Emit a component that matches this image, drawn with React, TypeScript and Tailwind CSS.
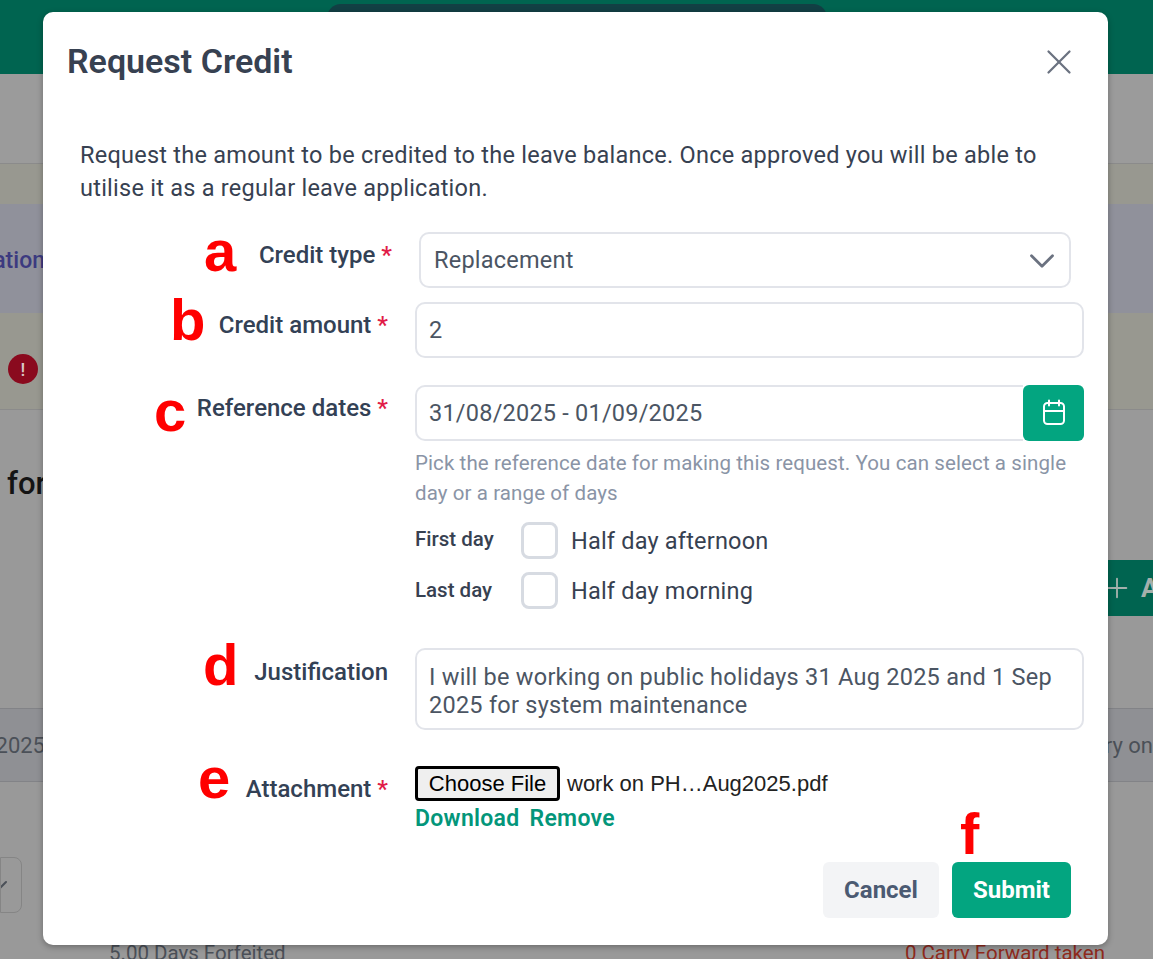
import React from 'react';
import { ChevronDown, Plus, X } from 'lucide-react';

const Marker: React.FC<{ letter: string; className: string }> = ({ letter, className }) => (
  <span className={`absolute font-['Liberation_Sans',sans-serif] font-bold text-[#ff0000] text-[58px] leading-none ${className}`}>
    {letter}
  </span>
);

const Required = () => <span className="text-[#e11d48] ml-[6px]">*</span>;

const FieldLabel: React.FC<{ text: string; required?: boolean; className?: string }> = ({ text, required, className = '' }) => (
  <label className={`w-[308px] shrink-0 text-right text-[24px] leading-[28px] font-medium text-[#334155] ${className}`}>
    {text}
    {required && <Required />}
  </label>
);

const inputCls = 'flex items-center h-[56px] bg-white border-2 border-[#e2e4ea] pt-[2px] text-[23.5px] text-[#4b5563] tracking-[0.22px]';

// calendar glyph with short ticks poking over the top edge
const CalendarGlyph = () => (
  <svg width="24" height="28" viewBox="0 0 24 28" fill="none" stroke="white" strokeWidth="2" strokeLinecap="round">
    <rect x="2" y="4" width="20" height="21" rx="3.5" />
    <path d="M2 12h20M7 1.5v5M17 1.5v5" />
  </svg>
);

const Backdrop = () => (
  <div className="h-[959px] overflow-hidden bg-[#999999] flex flex-col text-[#4b5058]">
    <div className="h-[74px] shrink-0 bg-[#006450] flex justify-center items-start pt-[4px]">
      <div className="w-[500px] h-[20px] rounded-t-[14px] bg-[#123f44]" />
    </div>
    <div className="h-[90px] shrink-0 bg-[#9b9b9b] border-b border-[#8b8b8b]" />
    <div className="h-[40px] shrink-0 bg-[#989890]" />
    <div className="h-[109px] shrink-0 bg-[#90919b] flex items-center">
      <div className="w-[45px] overflow-hidden flex justify-end whitespace-nowrap pt-[6px] text-[23px] font-medium text-[#3c3a80]">Leave application</div>
    </div>
    <div className="h-[97px] shrink-0 bg-[#989890] border-b border-[#8b8b8b] flex items-center pl-[8px] pt-[16px]">
      <div className="w-[30px] h-[30px] rounded-full bg-[#8a0a1e] text-[#d9c9c9] text-[18px] font-medium flex items-center justify-center">!</div>
    </div>
    <div className="h-[298px] shrink-0 relative">
      <div className="pl-[7px] pt-[56px] text-[31px] leading-[36px] font-medium text-[#141414]">for</div>
      <div className="absolute right-0 top-[150px] w-[45px] h-[56px] bg-[#006450] text-[#a4b0ac] text-[26px] font-bold flex items-center whitespace-nowrap overflow-hidden">
        <Plus size={32} strokeWidth={1.4} className="shrink-0 -ml-[7px]" />
        <span className="ml-[8px]">Add</span>
      </div>
    </div>
    <div className="h-[74px] shrink-0 bg-[#8f9094] border-y border-[#828387] flex items-center justify-between text-[22px]">
      <span className="w-[45px] overflow-hidden flex justify-end">2025</span>
      <span className="w-[45px] overflow-hidden flex justify-end whitespace-nowrap">ry on</span>
    </div>
    <div className="h-[75px] shrink-0" />
    <div className="h-[56px] w-[22px] shrink-0 border border-[#858585] rounded-r-[8px] flex items-center overflow-hidden">
      <ChevronDown size={24} className="-ml-[13px] shrink-0" />
    </div>
    <div className="flex justify-between pl-[109px] pr-[48px] pt-[27px] text-[20.5px] leading-[26px]">
      <span>5.00 Days Forfeited</span>
      <span className="text-[#8f2a1c]">0 Carry Forward taken</span>
    </div>
  </div>
);

export default function App() {
  return (
    <div className="relative font-['Roboto',sans-serif] w-[1153px] h-[959px] overflow-hidden">
      <Backdrop />

      <div className="absolute left-[43px] top-[12px] w-[1065px] h-[933px] bg-white rounded-[10px] shadow-[0_2px_6px_rgba(0,0,0,0.3)]">
        <div className="flex items-center justify-between h-[98px] pl-[24px] pr-[28px]">
          <h2 className="text-[34px] font-semibold text-[#374151] leading-none">Request Credit</h2>
          <X size={42} strokeWidth={1.3} className="text-[#6b7280] mt-[2px]" />
        </div>

        <div className="pl-[37px] pr-[24px] pt-[29px]">
          <p className="text-[23.5px] leading-[33px] tracking-[0.25px] text-[#374151] w-[990px]">
            Request the amount to be credited to the leave balance. Once approved you will be able to utilise it as a regular leave application.
          </p>

          <div className="flex mt-[27px] items-start">
            <FieldLabel text="Credit type" required className="pt-[9px] pl-[4px] !w-[312px]" />
            <div className="ml-[27px] w-[652px]">
              <div className={`${inputCls} rounded-[10px] pl-[13px] pr-[13px] justify-between`}>
                <span>Replacement</span>
                <ChevronDown size={42} strokeWidth={1.6} className="text-[#6b7280] -mr-[7px]" />
              </div>
            </div>
          </div>

          <div className="flex mt-[14px] items-start">
            <FieldLabel text="Credit amount" required className="pt-[9px]" />
            <div className={`${inputCls} ml-[27px] w-[669px] rounded-[10px] px-[12px]`}>2</div>
          </div>

          <div className="flex mt-[27px] items-start">
            <FieldLabel text="Reference dates" required className="pt-[9px]" />
            <div className="ml-[27px] w-[669px]">
              <div className="flex">
                <div className={`${inputCls} flex-1 rounded-l-[10px] border-r-0 px-[12px]`}>31/08/2025 - 01/09/2025</div>
                <div className="w-[61px] h-[56px] bg-[#03a580] rounded-[6px] flex items-center justify-center">
                  <CalendarGlyph />
                </div>
              </div>
              <p className="mt-[7px] text-[20.5px] leading-[30px] tracking-[0.1px] text-[#8a94a6]">
                Pick the reference date for making this request. You can select a single day or a range of days
              </p>
              <div className="flex items-center mt-[13px] h-[38px]">
                <span className="w-[106px] -mt-[2px] text-[20.5px] font-medium text-[#374151]">First day</span>
                <span className="w-[37px] h-[37px] rounded-[8px] border-[3px] border-[#d7dbe2]" />
                <span className="ml-[13px] mt-[4px] text-[23.5px] tracking-[0.2px] text-[#374151]">Half day afternoon</span>
              </div>
              <div className="flex items-center mt-[12px] h-[38px]">
                <span className="w-[106px] text-[20.5px] font-medium text-[#374151]">Last day</span>
                <span className="w-[37px] h-[37px] rounded-[8px] border-[3px] border-[#d7dbe2]" />
                <span className="ml-[13px] mt-[4px] text-[23.5px] tracking-[0.2px] text-[#374151]">Half day morning</span>
              </div>
            </div>
          </div>

          <div className="flex mt-[39px] items-start">
            <FieldLabel text="Justification" className="pt-[10px]" />
            <div className="ml-[27px] w-[669px] h-[82px] rounded-[10px] bg-white border-2 border-[#e2e4ea] pl-[12px] pr-[13px] pt-[13px] text-[23.5px] leading-[28px] tracking-[0.25px] text-[#4b5563]">
              I will be working on public holidays 31 Aug 2025 and 1 Sep 2025 for system maintenance
            </div>
          </div>

          <div className="flex mt-[36px] items-start">
            <FieldLabel text="Attachment" required className="pt-[9px]" />
            <div className="ml-[27px]">
              <div className="flex items-center font-['Liberation_Sans',sans-serif] text-[22px] text-[#222222]">
                <button className="w-[145px] h-[35px] rounded-[4px] bg-[#efefef] border-[3px] border-black text-black leading-none">Choose File</button>
                <span className="ml-[7px]">work on PH…Aug2025.pdf</span>
              </div>
              <div className="mt-[3px] flex gap-[10px] text-[23px] leading-[30px] font-semibold tracking-[0.3px] text-[#03967a]">
                <span>Download</span>
                <span>Remove</span>
              </div>
            </div>
          </div>

          <div className="flex justify-end gap-[13px] mt-[28px] pr-[13px]">
            <button className="w-[116px] h-[56px] rounded-[6px] bg-[#f3f4f6] text-[24px] font-bold text-[#4b5a72]">Cancel</button>
            <button className="w-[119px] h-[56px] rounded-[6px] bg-[#03a580] text-[24px] font-bold text-white">Submit</button>
          </div>
        </div>

        <Marker letter="a" className="left-[161px] top-[210px]" />
        <Marker letter="b" className="left-[127px] top-[279px]" />
        <Marker letter="c" className="left-[111px] top-[370px]" />
        <Marker letter="d" className="left-[160px] top-[624px]" />
        <Marker letter="e" className="left-[155px] top-[737px]" />
        <Marker letter="f" className="left-[917px] top-[793px]" />
      </div>
    </div>
  );
}
